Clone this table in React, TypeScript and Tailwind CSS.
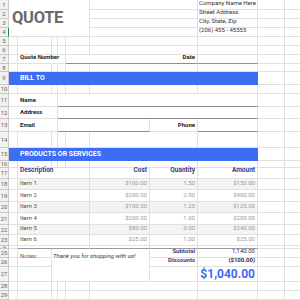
import { ReactNode } from 'react';
import { twMerge } from 'tailwind-merge';

const spans: Record<number, string> = {
  1: '',
  2: 'col-span-2',
  3: 'col-span-3',
  4: 'col-span-4',
  5: 'col-span-5',
  6: 'col-span-6',
  8: 'col-span-8',
};

const rowSpans: Record<number, string> = { 1: '', 3: 'row-span-3', 4: 'row-span-4' };

function Cell({ s = 1, r = 1, className = '', children }: { s?: number; r?: number; className?: string; children?: ReactNode }) {
  return (
    <div
      className={twMerge(
        'flex items-end whitespace-nowrap border-r border-b border-[#e0e0e0] pb-[2px] leading-none text-[6px] text-[#444]',
        spans[s],
        rowSpans[r],
        className
      )}
    >
      {children}
    </div>
  );
}

function Hdr({ n, className = '' }: { n: number; className?: string }) {
  return (
    <div
      className={twMerge(
        'flex items-center justify-center overflow-hidden border-r border-b border-[#c9c9c9] bg-[#f1f1f1] text-[6px] leading-none text-[#666]',
        className
      )}
    >
      {n}
    </div>
  );
}

// an empty spreadsheet row: A..G plus the two spare columns
function Blank({ n }: { n: number }) {
  return (
    <>
      <Hdr n={n} />
      <Cell />
      <Cell />
      <Cell />
      <Cell />
      <Cell />
      <Cell s={2} />
      <Cell />
      <Cell />
      <Cell />
    </>
  );
}

function Spare() {
  return (
    <>
      <Cell />
      <Cell />
    </>
  );
}

const items = [
  { name: 'Item 1', cost: '$100.00', qty: '1.50', amount: '$150.00' },
  { name: 'Item 2', cost: '$200.00', qty: '2.00', amount: '$400.00' },
  { name: 'Item 3', cost: '$100.00', qty: '1.25', amount: '$125.00' },
  { name: 'Item 4', cost: '$200.00', qty: '1.00', amount: '$200.00' },
  { name: 'Item 5', cost: '$80.00', qty: '3.00', amount: '$240.00' },
  { name: 'Item 6', cost: '$25.00', qty: '1.00', amount: '$25.00' },
];

const company = ['Company Name Here', 'Street Address', 'City, State, Zip', '(206) 455 - 45555'];

export default function App() {
  return (
    <div className="h-[300px] w-[300px] overflow-hidden bg-white font-['Roboto',sans-serif]">
      <div className="grid grid-cols-[9px_9px_34px_6px_8px_24px_60px_48px_60px_27px_16px] grid-rows-[10px_9px_9px_9px_9px_9px_9px_8px_13px_9px_13px_12px_13px_16px_13px_7px_11px_11px_12px_11px_12px_10px_11px_3px_9px_9px_15px_9px_9px]">
        {/* rows 1-4: title block + company details */}
        {company.map((line, i) => (
          <Row key={line}>
            <Hdr n={i + 1} className={i === 3 ? 'border-r-[#1e8e3e]' : ''} />
            {i === 0 && (
              <Cell s={5} r={4} className="items-center pb-0 pl-[3px] text-[16.5px] font-bold tracking-[-0.3px] text-[#6a6a6a]">
                QUOTE
              </Cell>
            )}
            <Cell s={2} />
            <Cell className="pl-px text-[#333]">{line}</Cell>
            <Spare />
          </Row>
        ))}

        <Blank n={5} />
        <Blank n={6} />

        {/* row 7 */}
        <Hdr n={7} />
        <Cell />
        <Cell s={3} className="pl-[2px] font-bold text-[#222]">Quote Number</Cell>
        <Cell s={3} className="justify-end border-b-[#8c8c8c] pr-[2px] font-bold text-[#222]">Date</Cell>
        <Cell className="border-b-[#8c8c8c]" />
        <Spare />

        <Blank n={8} />

        {/* row 9 */}
        <Hdr n={9} />
        <Cell s={8} className="items-center border-[#3d6df2] bg-[#3d6df2] pb-0 pl-[11px] text-[7px] font-bold text-white">BILL TO</Cell>
        <Spare />

        <Blank n={10} />

        {['Name', 'Address'].map((label, i) => (
          <Row key={label}>
            <Hdr n={11 + i} />
            <Cell className="border-r-0" />
            <Cell s={2} className="pl-[2px] font-bold text-[#222]">{label}</Cell>
            <Cell s={5} className="border-b-[#8c8c8c]" />
            <Spare />
          </Row>
        ))}

        {/* row 13 */}
        <Hdr n={13} />
        <Cell className="border-r-0" />
        <Cell s={2} className="pl-[2px] font-bold text-[#222]">Email</Cell>
        <Cell s={3} className="border-b-[#8c8c8c]" />
        <Cell className="justify-end pr-[2px] font-bold text-[#222]">Phone</Cell>
        <Cell className="border-b-[#8c8c8c]" />
        <Spare />

        <Blank n={14} />

        {/* row 15 */}
        <Hdr n={15} />
        <Cell s={8} className="items-center border-[#3d6df2] bg-[#3d6df2] pb-0 pl-[11px] text-[7px] font-bold text-white">PRODUCTS OR SERVICES</Cell>
        <Spare />

        <Blank n={16} />

        {/* row 17 */}
        <Hdr n={17} />
        <Cell />
        <Cell s={4} className="pl-[2px] text-[6.5px] font-bold text-[#333d8f]">Description</Cell>
        <Cell className="justify-end pr-[2px] text-[6.5px] font-bold text-[#333d8f]">Cost</Cell>
        <Cell className="justify-end pr-[2px] text-[6.5px] font-bold text-[#333d8f]">Quantity</Cell>
        <Cell className="justify-end pr-[2px] text-[6.5px] font-bold text-[#333d8f]">Amount</Cell>
        <Spare />

        {items.map((it, i) => {
          const bg = i % 2 === 0 ? 'bg-[#f3f3f3]' : '';
          return (
            <Row key={it.name}>
              <Hdr n={18 + i} />
              <Cell />
              <Cell s={4} className={twMerge('pl-[2px] text-[#555]', bg)}>{it.name}</Cell>
              <Cell className={twMerge('justify-end pr-[2px] text-[#9a9a9a]', bg)}>{it.cost}</Cell>
              <Cell className={twMerge('justify-end pr-[2px] text-[#9a9a9a]', bg)}>{it.qty}</Cell>
              <Cell className={twMerge('justify-end pr-[2px] text-[#9a9a9a]', bg)}>{it.amount}</Cell>
              <Spare />
            </Row>
          );
        })}

        {/* row 24, squeezed to almost nothing */}
        <Hdr n={24} className="text-[3px] leading-[3px]" />
        <Cell />
        <Cell s={4} className="border-b-[#9a9a9a]" />
        <Cell className="border-b-[#9a9a9a]" />
        <Cell className="border-b-[#9a9a9a]" />
        <Cell className="border-b-[#9a9a9a]" />
        <Spare />

        {/* row 25 */}
        <Hdr n={25} />
        <Cell />
        <Cell className="items-start pb-0 pl-[2px] pt-[2px] text-[#666]">Notes:</Cell>
        <Cell s={4} r={3} className="items-start pb-0 pl-px pt-[2px] italic text-[#333]">Thank you for shopping with us!</Cell>
        <Cell className="justify-end pr-[2px] font-bold text-[#333d8f]">Subtotal</Cell>
        <Cell className="justify-end pr-[2px] text-[#333]">1,140.00</Cell>
        <Spare />

        {/* row 26 */}
        <Hdr n={26} />
        <Cell />
        <Cell />
        <Cell className="justify-end pr-[2px] font-bold text-[#333d8f]">Discounts</Cell>
        <Cell className="justify-end pr-[2px] font-bold text-[#333]">($100.00)</Cell>
        <Spare />

        {/* row 27 */}
        <Hdr n={27} />
        <Cell />
        <Cell />
        <Cell />
        <Cell className="items-center justify-end pb-0 pr-[2px] text-[12px] font-bold text-[#3d6df2]">$1,040.00</Cell>
        <Spare />

        <Blank n={28} />
        <Blank n={29} />
      </div>
    </div>
  );
}

function Row({ children }: { children: ReactNode }) {
  return <>{children}</>;
}
